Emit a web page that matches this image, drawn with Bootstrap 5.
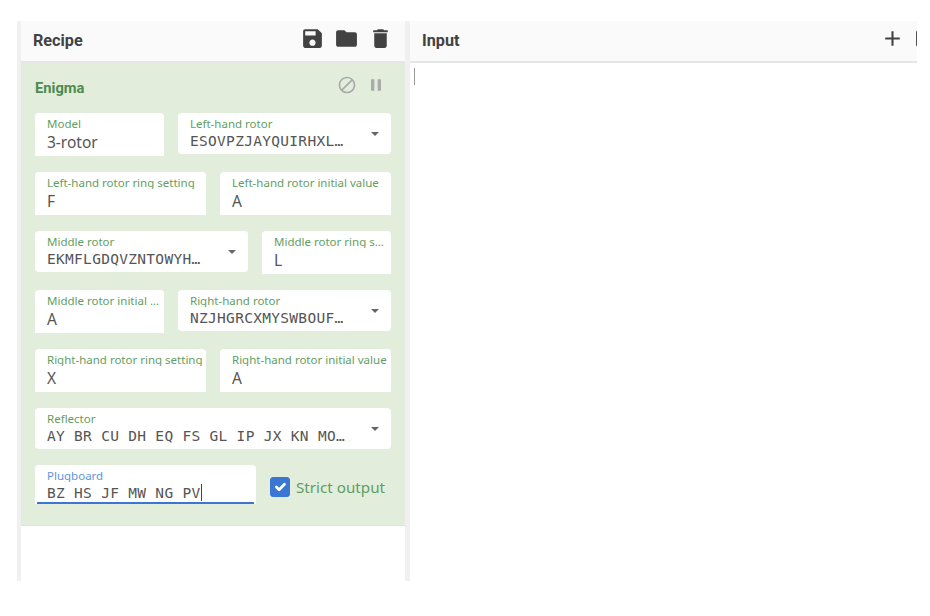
<!DOCTYPE html>
<html lang="en">
<head>
<meta charset="utf-8">
<title>Recipe</title>
<link rel="stylesheet" href="https://cdn.jsdelivr.net/npm/bootstrap@5.3.0/dist/css/bootstrap.min.css">
<style>
html,body{height:100%;background:#fff}
body{padding:21px 13px 35px 17px;font-family:"Noto Sans",sans-serif;overflow:hidden}
.app-frame{height:560px;background:#f0f0f0;padding:0 0 0 4px;gap:5px}
.pane-recipe{width:384px;flex:none;background:#fff}
.pane-input{flex:1 1 0;min-width:0;background:#fff;overflow:hidden}
.pane-head{height:42px;background:#fafafa;border-bottom:2px solid #e6e6e6;flex:none}
.pane-head-recipe{padding:0 12px 0 12px}
.pane-head-input{padding:0 0 0 12px}
.pane-title{font-family:Roboto,sans-serif;font-weight:700;font-size:16.2px;color:#424242;line-height:1;margin:0}
.head-icons{gap:9px;margin-top:-5px}
.head-icons svg{width:25px;height:25px;fill:#424242;display:block;flex:none}
.head-icons-input{margin-right:-22px}
.op-box{background:#e2eedb;border-bottom:1px solid #dcead2;padding:15px 14px 21px 14px}
.op-head{height:20px;margin-bottom:15px;padding-right:5px}
.op-title{font-family:Roboto,sans-serif;font-weight:700;font-size:14.7px;color:#4f8a50;margin:0;line-height:20px}
.op-icons{gap:9px;margin-top:-6px}
.op-icons svg{width:20px;height:20px;fill:#aaa;display:block}
.op-row{gap:14px;margin-bottom:16px;align-items:flex-start}
.op-row:last-child{margin-bottom:0}
.fld{background:#fff;border:0;border-radius:4px 4px 0 0;padding:4px 4px 0 12px;height:43px;min-width:0;position:relative}
.fld-sel{height:41px;border-radius:4px;padding-right:40px}
.fld-sm{flex:0 0 129px;width:129px}
.fld-md{flex:0 0 171px;width:171px}
.fld-lg{flex:0 0 213px;width:213px}
.fld-xl{flex:0 0 356px;width:356px}
.fld-plug{flex:0 0 221px;width:221px;height:39px}
.fld-label{display:block;font-family:"Noto Sans",sans-serif;font-size:11.5px;line-height:13px;height:13px;color:#5f9e63;overflow:hidden;white-space:nowrap;margin:0}
.fld-value{display:block;font-family:"Noto Sans",sans-serif;font-size:15.5px;line-height:20px;margin-top:2px;color:#555;white-space:nowrap;overflow:hidden}
.fld-mono{font-family:"DejaVu Sans Mono",monospace;font-size:14.5px;letter-spacing:.3px;line-height:21px;margin-top:1px}
.fld-caretbox{position:absolute;right:12px;top:19px;width:0;height:0;border-left:4px solid transparent;border-right:4px solid transparent;border-top:4px solid #666}
.plug-line{position:absolute;left:2px;right:2px;bottom:0;height:2px;background:#3a76d2}
.plug-label{color:#5f93dd}
.text-caret{display:inline-block;width:1px;height:17px;background:#444;vertical-align:-3px}
.strict{padding:0;min-height:0;gap:6px;margin:12px 0 0 0}
.strict .form-check-input{width:20px;height:20px;margin:0;float:none;background-color:#3a76d2;border-color:#3a76d2;border-radius:3px;flex:none}
.strict .form-check-label{font-size:15.2px;color:#5f9e63;line-height:20px;white-space:nowrap}
.input-caret{width:1px;height:17px;background:#999;margin:5px 0 0 4px}
</style>
</head>
<body>
<div class="app-frame d-flex">
  <section class="pane-recipe d-flex flex-column">
    <header class="pane-head pane-head-recipe d-flex align-items-center justify-content-between">
      <h1 class="pane-title">Recipe</h1>
      <div class="head-icons d-flex">
        <svg viewBox="0 0 24 24"><path d="M17 3H5c-1.11 0-2 .9-2 2v14c0 1.1.89 2 2 2h14c1.1 0 2-.9 2-2V7l-4-4zm-5 16c-1.66 0-3-1.34-3-3s1.34-3 3-3 3 1.34 3 3-1.34 3-3 3zm3-10H5V5h10v4z"/></svg>
        <svg viewBox="0 0 24 24"><path d="M10 4H4c-1.1 0-1.99.9-1.99 2L2 18c0 1.1.9 2 2 2h16c1.1 0 2-.9 2-2V8c0-1.1-.9-2-2-2h-8l-2-2z"/></svg>
        <svg viewBox="0 0 24 24"><path d="M6 19c0 1.1.9 2 2 2h8c1.1 0 2-.9 2-2V7H6v12zM19 4h-3.5l-1-1h-5l-1 1H5v2h14V4z"/></svg>
      </div>
    </header>
    <div class="op-box">
      <div class="op-head d-flex align-items-center justify-content-between">
        <h2 class="op-title">Enigma</h2>
        <div class="op-icons d-flex">
          <svg viewBox="0 0 24 24"><path d="M12 2C6.48 2 2 6.48 2 12s4.48 10 10 10 10-4.48 10-10S17.52 2 12 2zM4 12c0-4.42 3.58-8 8-8 1.85 0 3.55.63 4.9 1.69L5.69 16.9C4.63 15.55 4 13.85 4 12zm8 8c-1.85 0-3.55-.63-4.9-1.69L18.31 7.1C19.37 8.45 20 10.15 20 12c0 4.42-3.58 8-8 8z"/></svg>
          <svg viewBox="0 0 24 24"><path d="M6 19h4V5H6v14zm8-14v14h4V5h-4z"/></svg>
        </div>
      </div>

      <div class="op-row d-flex">
        <div class="fld fld-sm"><span class="fld-label">Model</span><span class="fld-value">3-rotor</span></div>
        <div class="fld fld-sel fld-lg"><span class="fld-label">Left-hand rotor</span><span class="fld-value fld-mono">ESOVPZJAYQUIRHXL…</span><span class="fld-caretbox"></span></div>
      </div>
      <div class="op-row d-flex">
        <div class="fld fld-md"><span class="fld-label">Left-hand rotor ring setting</span><span class="fld-value">F</span></div>
        <div class="fld fld-md"><span class="fld-label">Left-hand rotor initial value</span><span class="fld-value">A</span></div>
      </div>
      <div class="op-row d-flex">
        <div class="fld fld-sel fld-lg"><span class="fld-label">Middle rotor</span><span class="fld-value fld-mono">EKMFLGDQVZNTOWYH…</span><span class="fld-caretbox"></span></div>
        <div class="fld fld-sm"><span class="fld-label">Middle rotor ring s...</span><span class="fld-value">L</span></div>
      </div>
      <div class="op-row d-flex">
        <div class="fld fld-sm"><span class="fld-label">Middle rotor initial ...</span><span class="fld-value">A</span></div>
        <div class="fld fld-sel fld-lg"><span class="fld-label">Right-hand rotor</span><span class="fld-value fld-mono">NZJHGRCXMYSWBOUF…</span><span class="fld-caretbox"></span></div>
      </div>
      <div class="op-row d-flex">
        <div class="fld fld-md"><span class="fld-label">Right-hand rotor ring setting</span><span class="fld-value">X</span></div>
        <div class="fld fld-md"><span class="fld-label">Right-hand rotor initial value</span><span class="fld-value">A</span></div>
      </div>
      <div class="op-row d-flex">
        <div class="fld fld-sel fld-xl"><span class="fld-label">Reflector</span><span class="fld-value fld-mono">AY BR CU DH EQ FS GL IP JX KN MO…</span><span class="fld-caretbox"></span></div>
      </div>
      <div class="op-row d-flex">
        <div class="fld fld-plug"><span class="fld-label plug-label">Plugboard</span><span class="fld-value fld-mono">BZ HS JF MW NG PV<i class="text-caret"></i></span><span class="plug-line"></span></div>
        <div class="form-check strict d-flex align-items-center">
          <input class="form-check-input" type="checkbox" id="strict" checked>
          <label class="form-check-label" for="strict">Strict output</label>
        </div>
      </div>
    </div>
  </section>
  <section class="pane-input d-flex flex-column">
    <header class="pane-head pane-head-input d-flex align-items-center justify-content-between">
      <h1 class="pane-title">Input</h1>
      <div class="head-icons head-icons-input d-flex">
        <svg viewBox="0 0 24 24"><path d="M19 13h-6v6h-2v-6H5v-2h6V5h2v6h6v2z"/></svg>
        <svg viewBox="0 0 24 24"><path d="M10 4H4c-1.1 0-1.99.9-1.99 2L2 18c0 1.1.9 2 2 2h16c1.1 0 2-.9 2-2V8c0-1.1-.9-2-2-2h-8l-2-2z"/></svg>
      </div>
    </header>
    <div class="input-caret"></div>
  </section>
</div>
<script src="https://cdn.jsdelivr.net/npm/bootstrap@5.3.0/dist/js/bootstrap.bundle.min.js"></script>
</body>
</html>
